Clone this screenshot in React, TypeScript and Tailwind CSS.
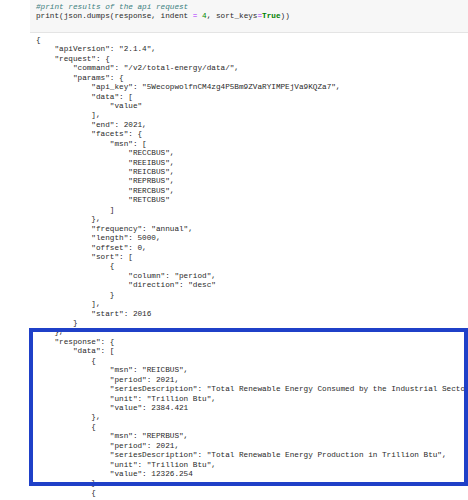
const outputLines = [
  "{",
  '    "apiVersion": "2.1.4",',
  '    "request": {',
  '        "command": "/v2/total-energy/data/",',
  '        "params": {',
  '            "api_key": "5WecopwolfnCM4zg4P5Bm9ZVaRYIMPEjVa9KQZa7",',
  '            "data": [',
  '                "value"',
  "            ],",
  '            "end": 2021,',
  '            "facets": {',
  '                "msn": [',
  '                    "RECCBUS",',
  '                    "REEIBUS",',
  '                    "REICBUS",',
  '                    "REPRBUS",',
  '                    "RERCBUS",',
  '                    "RETCBUS"',
  "                ]",
  "            },",
  '            "frequency": "annual",',
  '            "length": 5000,',
  '            "offset": 0,',
  '            "sort": [',
  "                {",
  '                    "column": "period",',
  '                    "direction": "desc"',
  "                }",
  "            ],",
  '            "start": 2016',
  "        }",
  "    },",
  '    "response": {',
  '        "data": [',
  "            {",
  '                "msn": "REICBUS",',
  '                "period": 2021,',
  '                "seriesDescription": "Total Renewable Energy Consumed by the Industrial Sector",',
  '                "unit": "Trillion Btu",',
  '                "value": 2384.421',
  "            },",
  "            {",
  '                "msn": "REPRBUS",',
  '                "period": 2021,',
  '                "seriesDescription": "Total Renewable Energy Production in Trillion Btu",',
  '                "unit": "Trillion Btu",',
  '                "value": 12326.254',
  "            },",
  "            {",
];

export default function App() {
  return (
    <div className="relative w-[468px] h-[500px] overflow-hidden bg-white font-['Liberation_Mono',monospace] text-[7.7px] leading-[9.43px] text-[#2a2a2a]">
      {/* input cell */}
      <div className="ml-[30px] bg-[#f7f7f7] border-b border-[#e4e4e4] pl-[6px] pt-[3px] pb-[10px]">
        <pre className="whitespace-pre font-['Liberation_Mono',monospace]">
          <span className="italic text-[#408080]">#print results of the api request</span>
          {"\n"}
          print(json.dumps(response, indent <span className="text-[#aa22ff]">=</span>{" "}
          <span className="text-[#008800]">4</span>, sort_keys<span className="text-[#aa22ff]">=</span>
          <span className="font-bold text-[#008000]">True</span>))
        </pre>
      </div>

      {/* output */}
      <pre className="whitespace-pre pl-[36px] pt-[3px] font-['Liberation_Mono',monospace]">
        {outputLines.join("\n")}
      </pre>

      {/* highlight annotation */}
      <div className="absolute left-[29px] top-[328px] w-[439px] h-[158px] border-4 border-[#1f40c8]" />
    </div>
  );
}
